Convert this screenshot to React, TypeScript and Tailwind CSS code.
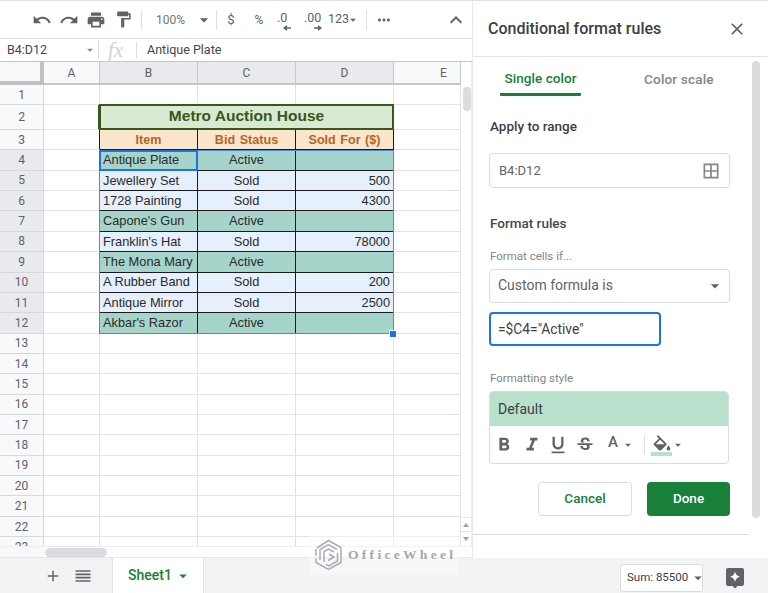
import React from "react";
import {
  MdUndo, MdRedo, MdPrint, MdFormatPaint, MdArrowDropDown, MdKeyboardArrowUp, MdMoreHoriz,
  MdClose, MdBorderAll, MdFormatBold, MdFormatItalic, MdFormatUnderlined, MdStrikethroughS,
  MdFormatColorFill, MdAdd, MdReorder,
} from "react-icons/md";

const rowH = "h-[20.37px]";
const grid = "grid grid-cols-[44px_56px_98px_98px_98px_67px]";
const light = "border-[#e2e3e3]";

function ColHead({ label, sel, extra }: { label: string; sel?: boolean; extra?: string }) {
  return (
    <div className={`flex items-center justify-center pt-[1px] leading-none border-r border-b-2 border-[#c4c7c5] text-[12px] text-[#5f6368] ${sel ? "bg-[#e8eaed]" : "bg-[#f8f9fa]"} ${extra ?? ""}`}>
      {label}
    </div>
  );
}

function RowHead({ n, sel }: { n: number; sel?: boolean }) {
  return (
    <div className={`flex items-center justify-center leading-none border-r border-b border-[#d6d8da] text-[12px] text-[#5f6368] font-['Roboto',sans-serif] ${sel ? "bg-[#e8eaed]" : "bg-[#f8f9fa]"}`}>
      {n}
    </div>
  );
}

function EmptyRow({ n }: { n: number }) {
  return (
    <div className={`${grid} ${rowH} grid-rows-[20.37px]`}>
      <RowHead n={n} />
      <div className={`border-r border-b ${light}`} />
      <div className={`border-r border-b ${light}`} />
      <div className={`border-r border-b ${light}`} />
      <div className={`border-r border-b ${light}`} />
      <div className={`border-r border-b ${light}`} />
    </div>
  );
}

function DataRow({ n, item, status, sold }: { n: number; item: string; status: string; sold?: string }) {
  const bg = status === "Active" ? "bg-[#a6d4cb]" : "bg-[#e6effc]";
  const cell = `flex items-center pt-[1px] leading-none border-r border-b border-[#1a1a1a] text-[12.8px] text-[#2a2a2a] ${bg}`;
  return (
    <div className={`${grid} ${rowH} grid-rows-[20.37px]`}>
      <RowHead n={n} sel />
      <div className={`border-r border-b ${light}`} />
      <div className={`${cell} pl-[3px] whitespace-nowrap overflow-hidden`}>{item}</div>
      <div className={`${cell} justify-center`}>{status}</div>
      <div className={`${cell} justify-end pr-[3px]`}>{sold}</div>
      <div className={`border-r border-b ${light}`} />
    </div>
  );
}

const rows: [number, string, string, string?][] = [
  [4, "Antique Plate", "Active"],
  [5, "Jewellery Set", "Sold", "500"],
  [6, "1728 Painting", "Sold", "4300"],
  [7, "Capone's Gun", "Active"],
  [8, "Franklin's Hat", "Sold", "78000"],
  [9, "The Mona Mary", "Active"],
  [10, "A Rubber Band", "Sold", "200"],
  [11, "Antique Mirror", "Sold", "2500"],
  [12, "Akbar's Razor", "Active"],
];

function Sep({ h = "h-[28px]" }: { h?: string }) {
  return <div className={`w-px ${h} bg-[#e0e0e0]`} />;
}

function TinyArrow({ right }: { right?: boolean }) {
  return (
    <svg width="8" height="6" viewBox="0 0 8 6" className="absolute top-[13px] right-[0px]">
      <path d={right ? "M0 3h6M4 .8 6.800 3 4 5.200" : "M8 3H2M4 .8 1.200 3 4 5.200"} stroke="#5f6368" strokeWidth="1.500" fill="none" />
    </svg>
  );
}

function Toolbar() {
  const icon = "text-[#5f6368]";
  return (
    <div className="h-[38px] flex items-center border-b border-[#e0e0e0] pl-[32px] font-['Roboto',sans-serif] text-[#5f6368]">
      <div className="w-[20px] flex justify-center"><MdUndo size={20} className={icon} /></div>
      <div className="w-[20px] ml-[7px] flex justify-center"><MdRedo size={20} className={icon} /></div>
      <div className="w-[20px] ml-[7px] flex justify-center"><MdPrint size={20} className={icon} /></div>
      <div className="w-[20px] ml-[7px] flex justify-center"><MdFormatPaint size={19} className={icon} /></div>
      <div className="ml-[8px]"><Sep h="h-[20px]" /></div>
      <div className="ml-[14px] w-[32px] text-[12px] text-[#6f7680]">100%</div>
      <div className="ml-[6px] w-[20px] flex justify-center"><MdArrowDropDown size={20} /></div>
      <div className="ml-[2px]"><Sep h="h-[20px]" /></div>
      <div className="ml-[9px] w-[10px] text-[13px] text-center">$</div>
      <div className="ml-[18px] w-[10px] text-[12px] text-center">%</div>
      <div className="ml-[13px] w-[14px] relative text-[12.5px] leading-none -mt-[3px]">
        .0
        <TinyArrow />
      </div>
      <div className="ml-[13px] w-[18px] relative text-[12.5px] leading-none -mt-[3px]">
        .00
        <TinyArrow right />
      </div>
      <div className="ml-[6px] w-[21px] text-[12.5px]">123</div>
      <div className="-ml-[3px]"><MdArrowDropDown size={14} /></div>
      <div className="ml-[6px]"><Sep h="h-[20px]" /></div>
      <div className="ml-[8px] w-[18px] flex justify-center"><MdMoreHoriz size={18} /></div>
      <div className="ml-[51px] w-[24px] flex justify-center"><MdKeyboardArrowUp size={24} /></div>
    </div>
  );
}

function FormulaBar() {
  return (
    <div className="h-[23px] flex items-center border-b border-[#c4c7c5] font-['Roboto',sans-serif] text-[#444746] text-[12.5px]">
      <div className="w-[82px] pl-[7px] pt-[1px]">B4:D12</div>
      <div className="w-[16px] flex justify-center text-[#80868b]"><MdArrowDropDown size={14} /></div>
      <div className="w-px h-[18px] bg-[#dadce0]" />
      <div className="w-[37px] pl-[9px] font-['Liberation_Serif',serif] italic text-[21px] text-[#d0d3d6] leading-none">fx</div>
      <div className="w-px h-[16px] bg-[#dadce0]" />
      <div className="pl-[10px] pt-[1px] text-[12.5px]">Antique Plate</div>
    </div>
  );
}

function Sheet() {
  return (
    <div className="w-[472px] h-[557px] flex flex-col shrink-0 bg-white">
      <Toolbar />
      <FormulaBar />
      <div className="flex h-[484px] overflow-hidden">
        <div className="relative w-[461px] font-['Liberation_Sans',sans-serif]">
          <div className={`${grid} h-[23px] font-['Roboto',sans-serif]`}>
            <div className="relative bg-[#f8f9fa] border-r-4 border-b-4 border-[#c0c0c0]" />
            <ColHead label="A" />
            <ColHead label="B" sel />
            <ColHead label="C" sel />
            <ColHead label="D" sel />
            <ColHead label="E" extra="pl-[33px]" />
          </div>
          <EmptyRow n={1} />
          <div className={`${grid} h-[25px] grid-rows-[25px]`}>
            <RowHead n={2} />
            <div className="border-r-2 border-b border-r-[#38571a] border-b-[#e2e3e3]" />
            <div className="col-span-3 -ml-px -mt-px pb-[3px] leading-none flex items-center justify-center bg-[#d9ead3] border-2 border-[#38571a] font-bold text-[15.5px] text-[#38571a]">
              Metro Auction House
            </div>
            <div className={`border-r border-b ${light}`} />
          </div>
          <div className={`${grid} h-[20px] grid-rows-[20px]`}>
            <RowHead n={3} />
            <div className="border-r border-b border-r-[#1a1a1a] border-b-[#e2e3e3]" />
            {["Item", "Bid Status", "Sold For ($)"].map((t) => (
              <div key={t} className="flex items-center justify-center pt-[1px] leading-none bg-[#fce5cd] border-r border-b border-[#1a1a1a] font-bold text-[12.6px] text-[#b5651d] [word-spacing:1px]">
                {t}
              </div>
            ))}
            <div className={`border-r border-b ${light}`} />
          </div>
          {rows.map(([n, item, status, sold]) => (
            <DataRow key={n} n={n} item={item} status={status} sold={sold} />
          ))}
          {Array.from({ length: 11 }, (_, i) => (
            <EmptyRow key={i} n={13 + i} />
          ))}
          {/* selection overlay */}
          <div className="absolute left-[99px] top-[88px] w-[295px] h-[184px] border border-[#4a8ae0] pointer-events-none" />
          <div className="absolute left-[99px] top-[88px] w-[99px] h-[21px] border-2 border-[#1a73e8] pointer-events-none" />
          <div className="absolute left-[389px] top-[268px] w-[8px] h-[8px] bg-[#1a73e8] border border-white" />
        </div>
        <div className="w-[11px] flex flex-col border-r border-[#eeeeee] bg-white">
          <div className="h-[455px] pt-[25px] px-[2px]">
            <div className="h-[24px] w-[8px] rounded-full bg-[#dadce0]" />
          </div>
          <div className="h-[14px] flex items-center justify-center border-t border-[#e2e3e3]">
            <div className="w-0 h-0 border-x-[3px] border-x-transparent border-b-[4px] border-b-[#9aa0a6]" />
          </div>
          <div className="h-[14px] flex items-center justify-center border-t border-[#e2e3e3]">
            <div className="w-0 h-0 border-x-[3px] border-x-transparent border-t-[4px] border-t-[#9aa0a6]" />
          </div>
        </div>
      </div>
      <div className="h-[12px] flex bg-white border-t border-[#eceded]">
        <div className="w-[44px] bg-[#f8f9fa]" />
        <div className="w-[62px] h-[9px] mt-[1px] ml-[1px] rounded-full bg-[#dadce0]" />
      </div>
    </div>
  );
}

function Panel() {
  return (
    <div className="relative w-[296px] h-[557px] bg-white border-l border-[#e8e8e8] font-['Roboto',sans-serif] flex flex-col">
      <div className="h-[56px] shrink-0 flex items-center justify-between pl-[15px] pr-[21px] border-b border-[#e3e3e3]">
        <div className="text-[16px] font-medium text-[#3c4043]">Conditional format rules</div>
        <MdClose size={20} className="text-[#5f6368]" />
      </div>
      <div className="flex-1 flex">
        <div className="w-[279px] flex flex-col">
          <div className="h-[40px] mt-[4px] flex text-[13.6px] font-medium">
            <div className="w-[81px] ml-[27px] h-[35px] flex items-center justify-center text-[#188038] border-b-[3px] border-[#188038] pt-[2px] rounded-b-[1px]">
              Single color
            </div>
            <div className="ml-[63px] h-[35px] pt-[2px] flex items-center text-[#80868b] tracking-[0.15px]">Color scale</div>
          </div>
          <div className="ml-[17px] mt-[15px] text-[13.5px] font-medium text-[#3c4043] leading-[20px]">Apply to range</div>
          <div className="ml-[16px] mt-[17px] w-[241px] h-[35px] flex items-center justify-between pl-[9px] pr-[8px] border border-[#dadce0] rounded-[4px] text-[13px] text-[#5f6368]">
            B4:D12
            <MdBorderAll size={20} className="text-[#80868b]" />
          </div>
          <div className="ml-[17px] mt-[25px] text-[13.5px] font-medium text-[#444746] leading-[20px]">Format rules</div>
          <div className="ml-[17px] mt-[15px] text-[11.5px] text-[#80868b] leading-[16px]">Format cells if...</div>
          <div className="ml-[16px] mt-[5px] w-[241px] h-[34px] flex items-center justify-between pl-[8px] pr-[4px] pb-[1px] border border-[#dadce0] rounded-[4px] text-[14px] text-[#5f6368]">
            <span className="-mt-[1px]">Custom formula is</span>
            <MdArrowDropDown size={20} className="text-[#5f6368]" />
          </div>
          <div className="ml-[16px] mt-[9px] w-[172px] h-[34px] flex items-center pl-[7px] border-2 border-[#1a73e8] rounded-[4px] text-[13.8px] text-[#3c4043]">
            =$C4="Active"
          </div>
          <div className="ml-[17px] mt-[24px] text-[11.5px] text-[#80868b] leading-[16px]">Formatting style</div>
          <div className="ml-[16px] mt-[5px] w-[240px] h-[73px] border border-[#dadce0] rounded-[4px] overflow-hidden">
            <div className="h-[34px] bg-[#b7e1cd] flex items-center pl-[8px] text-[14px] text-[#3c4043]">Default</div>
            <div className="h-[37px] flex items-center text-[#5f6368]">
              <MdFormatBold size={22} className="ml-[3px]" />
              <MdFormatItalic size={22} className="ml-[6px]" />
              <MdFormatUnderlined size={22} className="ml-[4px]" />
              <MdStrikethroughS size={20} className="ml-[6px]" />
              <div className="ml-[13px] text-[15px] font-medium -mt-[4px]">A</div>
              <MdArrowDropDown size={14} className="ml-[3px]" />
              <div className="ml-[9px] w-px h-[19px] bg-[#e0e0e0]" />
              <div className="ml-[6px] relative w-[22px] h-[26px]">
                <div className="absolute left-0 top-[3px] w-[22px] h-[17px] overflow-hidden">
                  <MdFormatColorFill size={22} className="text-[#5f6368]" />
                </div>
                <div className="absolute left-0 top-[20px] w-[21px] h-[4px] bg-[#b7e1cd]" />
              </div>
              <MdArrowDropDown size={14} className="-ml-[2px]" />
            </div>
          </div>
          <div className="ml-[65px] mt-[18px] flex gap-[15px]">
            <div className="w-[94px] h-[34px] pb-[1px] flex items-center justify-center border border-[#dadce0] rounded-[4px] text-[13.5px] font-medium text-[#188038]">
              Cancel
            </div>
            <div className="w-[83px] h-[34px] pb-[1px] flex items-center justify-center rounded-[4px] bg-[#188038] text-[13.5px] font-medium text-white">
              Done
            </div>
          </div>
          <div className="mt-[18px] h-px bg-[#dadce0] w-[276px]" />
        </div>
        <div className="pt-[4px]">
          <div className="w-[8px] h-[457px] rounded-full bg-[#dadce0]" />
        </div>
      </div>
    </div>
  );
}

function BottomBar() {
  return (
    <div className="h-[36px] flex items-stretch bg-[#f1f3f4] font-['Roboto',sans-serif] border-t border-[#e4e5e6]">
      <div className="w-[112px] flex items-center text-[#5f6368]">
        <MdAdd size={18} className="ml-[44px]" />
        <MdReorder size={20} className="ml-[11px]" />
      </div>
      <div className="w-[92px] bg-white border-x border-[#e4e5e6] flex items-center pl-[15px] text-[14px] font-medium text-[#188038]">
        Sheet1
        <MdArrowDropDown size={18} className="ml-[2px]" />
      </div>
      <div className="ml-[416px] mt-[6px] w-[83px] h-[28px] bg-white border border-[#dadce0] rounded-[3px] flex items-center pl-[6px] text-[11.5px] text-[#3c4043] whitespace-nowrap">
        Sum: 85500
        <MdArrowDropDown size={18} className="ml-[1px] shrink-0 text-[#5f6368]" />
      </div>
      <div className="ml-[23px] mt-[10px]">
        <svg width="18" height="21" viewBox="0 0 18 21">
          <path d="M2 0h14a2 2 0 0 1 2 2v14a2 2 0 0 1-2 2h-4.500L9 20.500 6.500 18H2a2 2 0 0 1-2-2V2a2 2 0 0 1 2-2z" fill="#5f6368" />
          <path d="M9 3.500c.6 3 2 4.500 5 5.300-3 .8-4.400 2.300-5 5.200-.6-2.900-2-4.400-5-5.200 3-.8 4.400-2.300 5-5.300z" fill="#fff" />
        </svg>
      </div>
    </div>
  );
}

function Watermark() {
  return (
    <div className="absolute left-[309px] top-[535px] w-[150px] h-[38px] bg-white/40 flex items-center pl-[5px]">
      <svg width="29" height="32" viewBox="0 0 29 32" fill="none" stroke="#a8acb5" strokeWidth="1.500">
        <path d="M3 9 14.500 1.500 27 8.500v15L14.500 30.500 2 23.500v-4" />
        <path d="M2 10v7M6 21V10.500L14.500 5.500 23 10.500" />
        <path d="M10 23V12.500L14.500 10 20 13M23.500 14v8L15 27 12 25.500M14 21.500l6-3.500-5-3" />
      </svg>
      <div className="ml-[5px] font-['Liberation_Serif',serif] font-bold text-[13.5px] tracking-[3.3px] text-[#a3a7b0]">OfficeWheel</div>
    </div>
  );
}

export default function App() {
  return (
    <div className="relative w-[768px] h-[593px] overflow-hidden bg-white flex flex-col border-t border-[#e0e0e0]">
      <div className="flex h-[556px]">
        <Sheet />
        <Panel />
      </div>
      <BottomBar />
      <Watermark />
    </div>
  );
}
